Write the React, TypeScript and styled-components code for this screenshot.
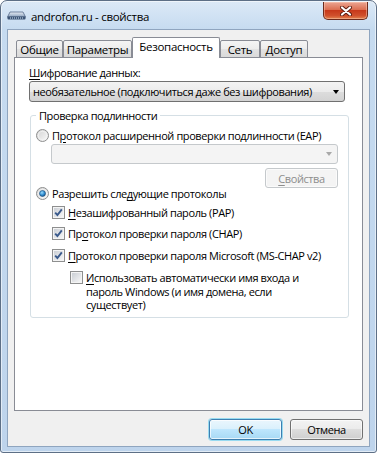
import React from 'react'
import styled, { createGlobalStyle } from 'styled-components'

const GlobalStyle = createGlobalStyle`
  html, body {
    margin: 0;
    padding: 0;
    background: #ffffff;
  }
  body {
    font-family: 'Open Sans', 'Noto Sans', sans-serif;
    font-size: 11px;
    letter-spacing: -0.4px;
    color: #000;
  }
`

const Window = styled.div`
  box-sizing: border-box;
  width: 377px;
  height: 453px;
  border: 1px solid #5d6f86;
  border-radius: 7px 7px 3px 3px;
  background: linear-gradient(to bottom, #dce9f7 0, #c6dbf0 28px, #bed4ec 100%);
  box-shadow: inset 0 0 0 1px rgba(255, 255, 255, 0.55);
  display: flex;
  flex-direction: column;
`

const TitleBar = styled.div`
  height: 28px;
  display: flex;
  align-items: center;
  padding: 0 8px 0 6px;
`

const TitleText = styled.span`
  margin-left: 5px;
  margin-top: 2px;
  font-size: 11.5px;
  letter-spacing: -0.3px;
  color: #000;
`

const CloseButton = styled.div`
  box-sizing: border-box;
  align-self: flex-start;
  margin-left: auto;
  margin-top: 1px;
  width: 45px;
  height: 18px;
  border: 1px solid #6b2a1c;
  border-top: none;
  border-radius: 0 0 5px 5px;
  background: linear-gradient(to bottom, #eba592 0, #dc6f52 45%, #c7391b 50%, #d0502c 80%, #e3844f 100%);
  box-shadow: inset 0 0 0 1px rgba(255, 210, 190, 0.45);
  display: flex;
  align-items: center;
  justify-content: center;
`

const Client = styled.div`
  flex: 1;
  margin: 0 6px 5px;
  border: 1px solid #8fa5bf;
  background: #f0f0f0;
  padding: 7px 6px 0 6px;
  display: flex;
  flex-direction: column;
`

const TabStrip = styled.div`
  position: relative;
  z-index: 1;
  height: 21px;
  margin-bottom: -1px;
  padding-left: 2px;
  display: flex;
  align-items: flex-end;
`

const Tab = styled.div<{ $w: number; $active?: boolean }>`
  box-sizing: border-box;
  width: ${p => p.$w}px;
  height: ${p => (p.$active ? 21 : 18)}px;
  border: 1px solid #898c95;
  border-bottom: ${p => (p.$active ? 'none' : '1px solid #898c95')};
  border-radius: 2px 2px 0 0;
  background: ${p =>
    p.$active ? '#ffffff' : 'linear-gradient(to bottom, #f4f4f4, #ececec 50%, #e2e2e2 50%, #dadada)'};
  padding-bottom: ${p => (p.$active ? 3 : 0)}px;
  display: flex;
  align-items: center;
  justify-content: center;
  font-size: 11.5px;
  letter-spacing: -0.3px;
  white-space: nowrap;
`

const Panel = styled.div`
  flex: 1;
  border: 1px solid #898c95;
  background: #ffffff;
  padding: 7px 13px 0 14px;
  display: flex;
  flex-direction: column;
`

const Label = styled.div`
  line-height: 15px;
`

const Key = styled.span`
  text-decoration: underline;
  text-underline-offset: 2px;
`

const Combo = styled.div<{ $disabled?: boolean }>`
  box-sizing: border-box;
  height: ${p => (p.$disabled ? 20 : 21)}px;
  margin: ${p => (p.$disabled ? '2px 0 0 15px' : '1px 4px 0 0')};
  border: 1px solid ${p => (p.$disabled ? '#c5c9cc' : '#707070')};
  border-radius: 3px;
  background: ${p =>
    p.$disabled ? '#f4f4f4' : 'linear-gradient(to bottom, #f3f3f3, #ebebeb 50%, #dddddd 50%, #d3d3d3)'};
  display: flex;
  align-items: center;
  padding: 0 5px 0 3px;
`

const ComboText = styled.span`
  flex: 1;
  white-space: nowrap;
`

const Arrow = styled.span<{ $disabled?: boolean }>`
  width: 0;
  height: 0;
  border-left: 3.5px solid transparent;
  border-right: 3.5px solid transparent;
  border-top: 4px solid ${p => (p.$disabled ? '#a9a9a9' : '#000')};
`

const Group = styled.fieldset`
  margin: 6px 0 0 1px;
  padding: 0 10px 5px 5px;
  border: 1px solid #d5dfe5;
  border-radius: 3px;
  display: flex;
  flex-direction: column;
`

const Legend = styled.legend`
  padding: 0 3px;
  line-height: 15px;
`

const Row = styled.div<{ $mt: number; $indent?: number }>`
  display: flex;
  align-items: center;
  height: 13px;
  margin-top: ${p => p.$mt}px;
  margin-left: ${p => p.$indent ?? 0}px;
  white-space: nowrap;
`

const WrapRow = styled.div<{ $mt: number; $indent: number }>`
  display: flex;
  align-items: flex-start;
  margin-top: ${p => p.$mt}px;
  margin-left: ${p => p.$indent}px;
`

const RowText = styled.span`
  margin-left: 3px;
  line-height: 13.5px;
`

const PushButton = styled.div<{ $disabled?: boolean; $default?: boolean; $mt?: number }>`
  box-sizing: border-box;
  width: 73px;
  height: ${p => (p.$disabled ? 20 : 21)}px;
  margin-top: ${p => p.$mt ?? 0}px;
  border: 1px solid ${p => (p.$disabled ? '#c5c9cc' : p.$default ? '#3c7fb1' : '#707070')};
  border-radius: 3px;
  background: ${p =>
    p.$disabled
      ? '#f4f4f4'
      : p.$default
      ? 'linear-gradient(to bottom, #eaf6fd, #d9f0fc 50%, #bee6fd 50%, #a7d9f5)'
      : 'linear-gradient(to bottom, #f3f3f3, #ebebeb 50%, #dddddd 50%, #cfcfcf)'};
  box-shadow: ${p =>
    p.$default
      ? '0 0 0 1px rgba(80, 200, 240, 0.55), inset 0 0 0 1px rgba(255,255,255,0.7)'
      : 'inset 0 0 0 1px rgba(255,255,255,0.6)'};
  color: ${p => (p.$disabled ? '#8d8d8d' : '#000')};
  display: flex;
  align-items: center;
  justify-content: center;
  align-self: ${p => (p.$disabled ? 'flex-end' : 'auto')};
`

const ButtonRow = styled.div`
  display: flex;
  justify-content: flex-end;
  gap: 8px;
  padding: 8px 0 6px;
`

const NetIcon = () => (
  <svg width="19" height="9" viewBox="0 0 19 9">
    <defs>
      <linearGradient id="ni" x1="0" y1="0" x2="0" y2="1">
        <stop offset="0" stopColor="#e8eef6" />
        <stop offset="1" stopColor="#8aa0bb" />
      </linearGradient>
    </defs>
    <path d="M3 1 H16 L18.5 6 H0.5 Z" fill="url(#ni)" stroke="#55698a" strokeWidth="0.8" />
    <rect x="0.5" y="5.5" width="18" height="3" rx="0.8" fill="#3e5677" />
    {[3, 5, 7, 9, 11, 13, 15].map(x => (
      <rect key={x} x={x} y="6.5" width="1" height="1" fill="#cfe3f5" />
    ))}
  </svg>
)

const CloseGlyph = () => (
  <svg width="12" height="10" viewBox="0 0 12 10">
    <path d="M2 1.5 L10 8.5 M10 1.5 L2 8.5" stroke="#5a1c10" strokeWidth="4" strokeLinecap="round" />
    <path d="M2 1.5 L10 8.5 M10 1.5 L2 8.5" stroke="#ffffff" strokeWidth="2.2" strokeLinecap="round" />
  </svg>
)

const Radio = ({ checked }: { checked?: boolean }) => (
  <svg width="13" height="13" viewBox="0 0 13 13">
    <defs>
      <linearGradient id="rb" x1="0" y1="0" x2="1" y2="1">
        <stop offset="0" stopColor="#d2d2d2" />
        <stop offset="1" stopColor="#fafafa" />
      </linearGradient>
      <radialGradient id="rd" cx="0.4" cy="0.35" r="0.7">
        <stop offset="0" stopColor="#9adbfc" />
        <stop offset="0.6" stopColor="#2e8bd0" />
        <stop offset="1" stopColor="#134d80" />
      </radialGradient>
    </defs>
    <circle cx="6.5" cy="6.5" r="6" fill="url(#rb)" stroke="#8e8f8f" />
    <circle cx="6.5" cy="6.5" r="4.2" fill="none" stroke="#f4f4f4" strokeWidth="0.8" />
    {checked && <circle cx="6.5" cy="6.5" r="3" fill="url(#rd)" stroke="#1e4f7c" strokeWidth="0.6" />}
  </svg>
)

const Check = ({ checked }: { checked?: boolean }) => (
  <svg width="13" height="13" viewBox="0 0 13 13">
    <defs>
      <linearGradient id="cb" x1="0" y1="0" x2="1" y2="1">
        <stop offset="0" stopColor="#cbcfd5" />
        <stop offset="1" stopColor="#f6f6f6" />
      </linearGradient>
    </defs>
    <rect x="0.5" y="0.5" width="12" height="12" fill="#f4f4f4" stroke="#8e8f8f" />
    <rect x="2" y="2" width="9" height="9" fill="url(#cb)" />
    {checked && <path d="M3.2 6.6 L5.4 9 L9.8 3.4" fill="none" stroke="#3a5a8c" strokeWidth="1.9" />}
  </svg>
)

const App: React.FC = () => {
  return (
    <>
      <GlobalStyle />
      <Window>
        <TitleBar>
          <NetIcon />
          <TitleText>androfon.ru - свойства</TitleText>
          <CloseButton>
            <CloseGlyph />
          </CloseButton>
        </TitleBar>
        <Client>
          <TabStrip>
            <Tab $w={47}>Общие</Tab>
            <Tab $w={69}>Параметры</Tab>
            <Tab $w={88} $active>
              Безопасность
            </Tab>
            <Tab $w={40}>Сеть</Tab>
            <Tab $w={48}>Доступ</Tab>
          </TabStrip>
          <Panel>
            <Label>
              <Key>Ш</Key>ифрование данных:
            </Label>
            <Combo>
              <ComboText>необязательное (подключиться даже без шифрования)</ComboText>
              <Arrow />
            </Combo>
            <Group>
              <Legend>Проверка подлинности</Legend>
              <Row $mt={6}>
                <Radio />
                <RowText>
                  П<Key>р</Key>отокол расширенной проверки подлинности (EAP)
                </RowText>
              </Row>
              <Combo $disabled>
                <ComboText />
                <Arrow $disabled />
              </Combo>
              <PushButton $disabled $mt={4}>
                <span>
                  <Key>С</Key>войства
                </span>
              </PushButton>
              <Row $mt={-1}>
                <Radio checked />
                <RowText>
                  Разрешить сле<Key>д</Key>ующие протоколы
                </RowText>
              </Row>
              <Row $mt={6} $indent={16}>
                <Check checked />
                <RowText>
                  <Key>Н</Key>езашифрованный пароль (PAP)
                </RowText>
              </Row>
              <Row $mt={8} $indent={16}>
                <Check checked />
                <RowText>
                  Пр<Key>о</Key>токол проверки пароля (CHAP)
                </RowText>
              </Row>
              <Row $mt={9} $indent={16}>
                <Check checked />
                <RowText>
                  <Key>П</Key>ротокол проверки пароля Microsoft (MS-CHAP v2)
                </RowText>
              </Row>
              <WrapRow $mt={9} $indent={34}>
                <Check />
                <RowText>
                  <Key>И</Key>спользовать автоматически имя входа и
                  <br />
                  пароль Windows (и имя домена, если
                  <br />
                  существует)
                </RowText>
              </WrapRow>
            </Group>
          </Panel>
          <ButtonRow>
            <PushButton $default>OK</PushButton>
            <PushButton>Отмена</PushButton>
          </ButtonRow>
        </Client>
      </Window>
    </>
  )
}

export default App
